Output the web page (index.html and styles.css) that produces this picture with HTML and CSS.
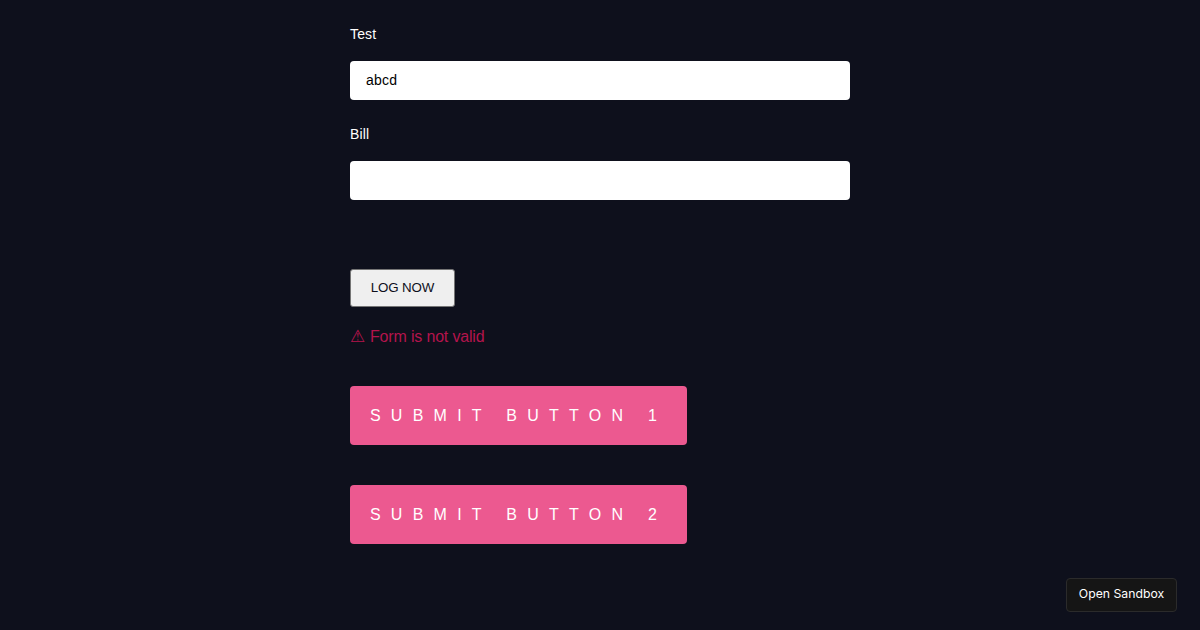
FILE: index.html
```html
<!DOCTYPE html>
<html lang="en">
<head>
    <meta charset="UTF-8">
    <meta name="viewport" content="width=device-width, initial-scale=1.0">
    <title>Form Sandbox</title>
    <link rel="stylesheet" href="styles.css">
</head>
<body>
    <form class="form">
        <label class="label" for="test">Test</label>
        <input class="input" type="text" id="test" name="test" value="abcd">

        <label class="label" for="bill">Bill</label>
        <input class="input" type="text" id="bill" name="bill">

        <button class="log-button" type="button">LOG NOW</button>

        <p class="error"><span class="error-icon">⚠</span>Form is not valid</p>

        <button class="submit-button" type="submit">SUBMIT BUTTON 1</button>
        <button class="submit-button" type="submit">SUBMIT BUTTON 2</button>
    </form>

    <a class="sandbox-link" href="#">Open Sandbox</a>
</body>
</html>
```

FILE: styles.css
```css
html, body {
    height: 100%;
}
body {
    margin: 0;
    overflow: hidden;
    background-color: #0e101c;
    font-family: 'Liberation Sans', Arial, sans-serif;
}
.form {
    display: flex;
    flex-direction: column;
    align-items: flex-start;
    width: 500px;
    margin: 0 auto;
    padding-top: 25px;
}
.label {
    display: block;
    height: 16px;
    line-height: 16px;
    margin: 1px 0 19px;
    font-size: 14px;
    letter-spacing: 0.15px;
    color: #fff;
}
.input {
    box-sizing: border-box;
    width: 100%;
    height: 39px;
    margin-bottom: 25px;
    padding: 0 16px 2px;
    border: none;
    border-radius: 4px;
    background: #fff;
    color: #000;
    font-family: inherit;
    font-size: 14px;
    letter-spacing: 0.2px;
}
.log-button {
    box-sizing: border-box;
    width: 105px;
    height: 38px;
    margin-top: 44px;
    padding: 0 0 2px;
    border: 1px solid #757575;
    border-radius: 3px;
    background-color: #efefef;
    color: #0e101c;
    font-family: inherit;
    font-size: 13.333px;
    letter-spacing: -0.1px;
    text-transform: uppercase;
}
.error {
    display: flex;
    align-items: center;
    margin: 20px 0 40px;
    height: 19px;
    line-height: 19px;
    font-size: 16px;
    letter-spacing: -0.17px;
    color: #b4144c;
}
.error-icon {
    width: 20px;
    font-size: 17px;
    letter-spacing: 0;
}
.submit-button {
    box-sizing: border-box;
    width: 337px;
    height: 59px;
    margin-bottom: 40px;
    padding: 0;
    border: none;
    border-radius: 4px;
    background-color: #ec5990;
    color: #fff;
    font-family: inherit;
    font-size: 16px;
    font-weight: 100;
    letter-spacing: 10.25px;
    text-transform: uppercase;
}
.sandbox-link {
    position: absolute;
    right: 23px;
    bottom: 18px;
    box-sizing: border-box;
    width: 111px;
    height: 34px;
    line-height: 30px;
    text-align: center;
    border: 1px solid #2b2b2b;
    border-radius: 4px;
    background-color: #151515;
    color: #fff;
    font-family: Inter, sans-serif;
    font-size: 12.25px;
    text-decoration: none;
}
```
